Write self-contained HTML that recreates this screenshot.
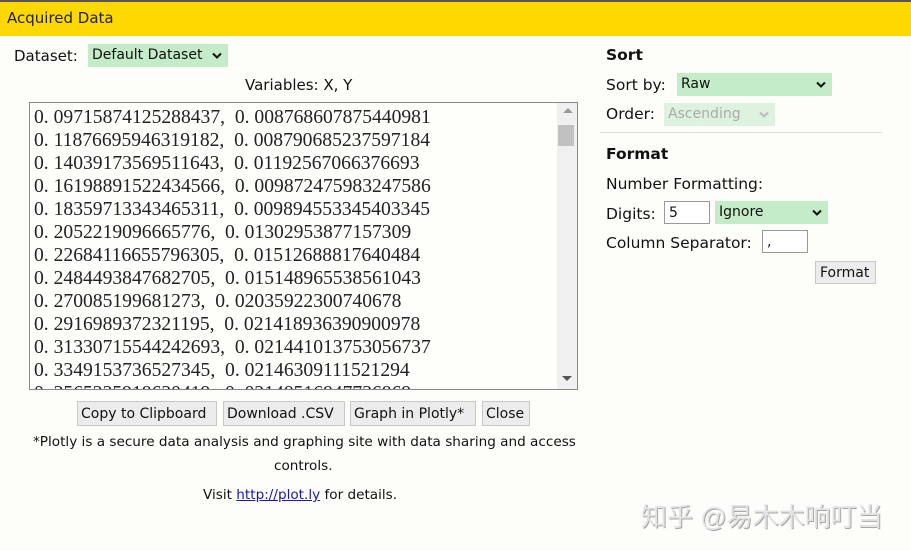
<!DOCTYPE html>
<html><head><meta charset="utf-8">
<style>
*{margin:0;padding:0;box-sizing:border-box}
body{width:911px;height:551px;background:#fdfdf9;font-family:"DejaVu Sans","Liberation Sans",sans-serif;font-size:13.6px;color:#111;position:relative;overflow:hidden}
.a{position:absolute;white-space:nowrap}
.title{left:0;top:0;width:911px;height:36px;background:#ffd800;border-top:2px solid #555;padding:7px 0 0 7px;font-size:15px;color:#222}
.sel{position:absolute;background:#c5ecc8;height:23px;padding:3px 4px;font-size:14px}
.chev{position:absolute;top:8px;width:10px;height:7px}
.btn{position:absolute;top:401px;height:25px;background:#ececec;border:1px solid #c8c8c8;font-size:14px;padding:4px 3px;white-space:nowrap}
.ta{left:29px;top:102px;width:549px;height:288px;border:1px solid #888;background:#fefefb;overflow:hidden}
.lines{position:absolute;left:4px;top:3px;font-family:"Liberation Serif",serif;font-size:19.6px;line-height:23px;color:#222;white-space:pre}
.inp{position:absolute;background:#fff;border:1px solid #999;height:23px;font-size:14px;padding:3px 4px}
</style></head><body>
<div class="a title">Acquired Data</div>
<div class="a" style="left:14px;top:47px;font-size:15px">Dataset:</div>
<div class="sel" style="left:88px;top:44px;width:140px">Default Dataset<svg class="chev" style="right:6px" viewBox="0 0 10 7"><path d="M1 1.5L5 5.5L9 1.5" stroke="#111" stroke-width="2" fill="none"/></svg></div>
<div class="a" style="left:245px;top:76px;font-size:15px">Variables: X, Y</div>
<div class="a ta">
<div class="lines">0. 09715874125288437,  0. 008768607875440981
0. 11876695946319182,  0. 008790685237597184
0. 14039173569511643,  0. 01192567066376693
0. 16198891522434566,  0. 009872475983247586
0. 18359713343465311,  0. 009894553345403345
0. 2052219096665776,  0. 01302953877157309
0. 22684116655796305,  0. 01512688817640484
0. 2484493847682705,  0. 015148965538561043
0. 270085199681273,  0. 02035922300740678
0. 2916989372321195,  0. 021418936390900978
0. 31330715544242693,  0. 021441013753056737
0. 3349153736527345,  0. 02146309111521294
0. 3565235918630419,  0. 02148516847736869</div>
<div style="position:absolute;right:0;top:0;width:20px;height:286px;background:#f0f0f0"></div>
<div style="position:absolute;right:4px;top:5px;width:0;height:0;border-left:5px solid transparent;border-right:5px solid transparent;border-bottom:5px solid #999"></div>
<div style="position:absolute;right:3px;top:22px;width:16px;height:21px;background:#c1c1c1"></div>
<div style="position:absolute;right:5px;top:273px;width:0;height:0;border-left:5px solid transparent;border-right:5px solid transparent;border-top:5px solid #555"></div>
</div>
<div class="btn" style="left:77px;width:140px">Copy to Clipboard</div>
<div class="btn" style="left:223px;width:122px">Download .CSV</div>
<div class="btn" style="left:350px;width:126px">Graph in Plotly*</div>
<div class="btn" style="left:482px;width:48px">Close</div>
<div class="a" style="left:33px;top:434px">*Plotly is a secure data analysis and graphing site with data sharing and access</div>
<div class="a" style="left:274px;top:458px">controls.</div>
<div class="a" style="left:203px;top:487px">Visit <span style="color:#1a1aa6;text-decoration:underline">http://plot.ly</span> for details.</div>

<div class="a" style="left:606px;top:46px;font-weight:bold;font-size:15.5px">Sort</div>
<div class="a" style="left:606px;top:76px;font-size:15.5px">Sort by:</div>
<div class="sel" style="left:677px;top:73px;width:155px">Raw<svg class="chev" style="right:6px" viewBox="0 0 10 7"><path d="M1 1.5L5 5.5L9 1.5" stroke="#111" stroke-width="2" fill="none"/></svg></div>
<div class="a" style="left:606px;top:105px;font-size:15.5px">Order:</div>
<div class="sel" style="left:664px;top:103px;width:111px;background:#ddf2df;color:#aaa">Ascending<svg class="chev" style="right:6px" viewBox="0 0 10 7"><path d="M1 1.5L5 5.5L9 1.5" stroke="#bbb" stroke-width="2" fill="none"/></svg></div>
<div class="a" style="left:600px;top:132px;width:282px;height:1px;background:#ddd"></div>
<div class="a" style="left:606px;top:145px;font-weight:bold;font-size:15.5px">Format</div>
<div class="a" style="left:606px;top:175px;font-size:15.5px">Number Formatting:</div>
<div class="a" style="left:606px;top:205px;font-size:15.5px">Digits:</div>
<div class="inp" style="left:664px;top:201px;width:46px">5</div>
<div class="sel" style="left:715px;top:201px;width:113px">Ignore<svg class="chev" style="right:6px" viewBox="0 0 10 7"><path d="M1 1.5L5 5.5L9 1.5" stroke="#111" stroke-width="2" fill="none"/></svg></div>
<div class="a" style="left:606px;top:234px;font-size:15.5px">Column Separator:</div>
<div class="inp" style="left:762px;top:230px;width:46px">,</div>
<div class="btn" style="left:815px;top:261px;width:61px;height:23px;padding:3px 4px">Format</div>

<div class="a" style="left:641px;top:497px;font-family:'Liberation Sans','Noto Sans CJK SC',sans-serif;font-size:26px;color:#e4e4e4;text-shadow:1px 1px 0 #a8a8a8">知乎 @易木木响叮当</div>
</body></html>
